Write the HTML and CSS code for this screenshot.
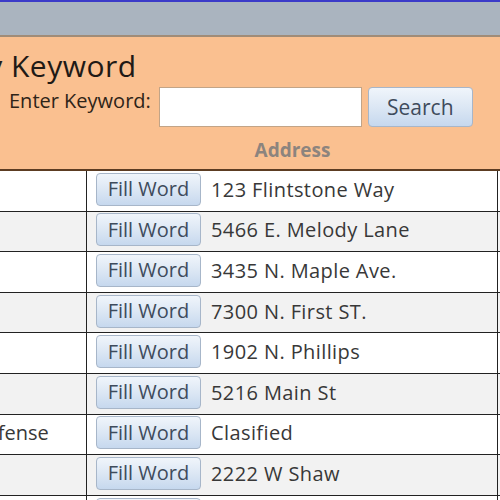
FILE: index.html
```html
<!DOCTYPE html>
<html>
<head>
<meta charset="utf-8">
<link rel="stylesheet" href="styles.css">
</head>
<body>
<div class="topbar"></div>
<div class="header">
  <h1 class="title">Search By Keyword</h1>
  <div class="search-row">
    <label class="label" for="kw">Enter Keyword:</label>
    <input class="kw" id="kw" type="text">
    <button class="btn search-btn" type="button">Search</button>
  </div>
</div>
<table class="grid">
  <thead>
    <tr><th class="c1"></th><th class="c2">Address</th><th class="c3"></th></tr>
  </thead>
  <tbody>
    <tr><td class="c1"></td><td class="c2"><button class="btn fill" type="button">Fill Word</button><span class="addr">123 Flintstone Way</span></td><td class="c3"></td></tr>
    <tr class="alt"><td class="c1"></td><td class="c2"><button class="btn fill" type="button">Fill Word</button><span class="addr">5466 E. Melody Lane</span></td><td class="c3"></td></tr>
    <tr><td class="c1"></td><td class="c2"><button class="btn fill" type="button">Fill Word</button><span class="addr">3435 N. Maple Ave.</span></td><td class="c3"></td></tr>
    <tr class="alt"><td class="c1"></td><td class="c2"><button class="btn fill" type="button">Fill Word</button><span class="addr">7300 N. First ST.</span></td><td class="c3"></td></tr>
    <tr><td class="c1"></td><td class="c2"><button class="btn fill" type="button">Fill Word</button><span class="addr">1902 N. Phillips</span></td><td class="c3"></td></tr>
    <tr class="alt"><td class="c1"></td><td class="c2"><button class="btn fill" type="button">Fill Word</button><span class="addr">5216 Main St</span></td><td class="c3"></td></tr>
    <tr><td class="c1">Defense</td><td class="c2"><button class="btn fill" type="button">Fill Word</button><span class="addr">Clasified</span></td><td class="c3"></td></tr>
    <tr class="alt"><td class="c1"></td><td class="c2"><button class="btn fill" type="button">Fill Word</button><span class="addr">2222 W Shaw</span></td><td class="c3"></td></tr>
    <tr><td class="c1"></td><td class="c2"><button class="btn fill" type="button">Fill Word</button><span class="addr">100 Oak St</span></td><td class="c3"></td></tr>
  </tbody>
</table>
</body>
</html>
```
FILE: styles.css
```css
html, body {
  margin: 0;
  padding: 0;
  overflow: hidden;
  background: #ffffff;
}
body {
  font-family: "Open Sans", "DejaVu Sans", sans-serif;
  color: #333333;
  width: 500px;
  height: 500px;
}
.topbar {
  height: 33px;
  background: #aab4bf;
  border-top: 2px solid #3b3bc8;
  border-bottom: 2px solid #a08c78;
}
.header {
  background: #fac090;
  padding-top: 9px;
}
.title {
  margin: 0 0 1px -139px;
  font-size: 30px;
  letter-spacing: 0.5px;
  font-weight: 400;
  line-height: 40px;
  color: #1f1a16;
  white-space: nowrap;
}
.search-row {
  display: flex;
  align-items: flex-start;
  height: 40px;
  padding-left: 9px;
}
.label {
  font-size: 20px;
  line-height: 28px;
  color: #2e2418;
  margin-right: 8px;
  white-space: nowrap;
}
.kw {
  box-sizing: border-box;
  width: 203px;
  height: 40px;
  margin: 0 6px 0 0;
  border: 1px solid #c2a487;
  background: #ffffff;
  padding: 0 4px;
  outline: none;
}
.btn {
  box-sizing: border-box;
  font-family: "Open Sans", "DejaVu Sans", sans-serif;
  color: #3e4b5c;
  background: linear-gradient(#f0f5fb, #dce7f4 50%, #c6d8ee);
  border: 1px solid #a7b6c9;
  border-radius: 4px;
  padding: 0;
  cursor: pointer;
}
.search-btn {
  width: 105px;
  height: 40px;
  font-size: 21px;
  line-height: 36px;
}
.grid {
  border-collapse: separate;
  border-spacing: 0;
  margin-left: -33px;
  width: 710px;
  table-layout: fixed;
}
.grid th {
  background: #fac090;
  height: 38px;
  padding: 4px 0 0 0;
  border-bottom: 2px solid #5c3c22;
  font-size: 19px;
  font-weight: 700;
  color: #8c847e;
  vertical-align: middle;
}
.grid th.c1 { width: 120px; }
.grid th.c2 { width: 411px; }
.grid tbody tr { height: 40.6px; }
.grid td {
  padding: 0 0 3px 0;
  border-bottom: 1px solid #222222;
  background: #ffffff;
  font-size: 20px;
  color: #383838;
  vertical-align: middle;
  white-space: nowrap;
}
.grid tr.alt td { background: #f2f2f2; }
.grid td.c1 {
  padding-left: 5px;
  border-right: 1px solid #222222;
  box-sizing: border-box;
}
.grid td.c2 {
  padding-left: 9px;
  border-right: 1px solid #222222;
}
.grid td.c3 { background: #ffffff; }
.fill {
  width: 105px;
  height: 33px;
  font-size: 20px;
  line-height: 30px;
  vertical-align: middle;
  margin-right: 10px;
}
.addr {
  vertical-align: middle;
  letter-spacing: 0.4px;
}
```
